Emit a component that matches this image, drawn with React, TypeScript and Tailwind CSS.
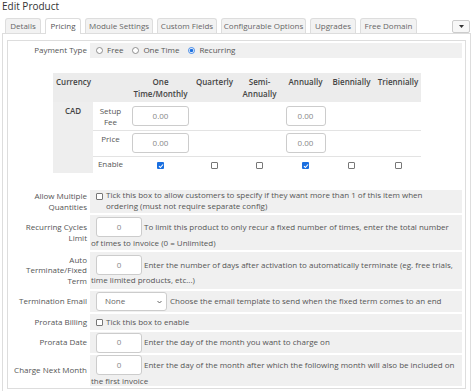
import React from 'react';

const tabs = [
  { label: 'Details', cls: 'w-[36px]' },
  { label: 'Pricing', cls: 'w-[36px]', active: true },
  { label: 'Module Settings', cls: 'w-[68px]' },
  { label: 'Custom Fields', cls: 'w-[60px]' },
  { label: 'Configurable Options', cls: 'w-[85px]' },
  { label: 'Upgrades', cls: 'w-[46px]' },
  { label: 'Free Domain', cls: 'w-[57px]' },
];

const Check = ({ on = false }: { on?: boolean }) =>
  on ? (
    <span className="inline-flex w-[7px] h-[7px] rounded-[1px] bg-[#1a6fe0] items-center justify-center shrink-0">
      <svg viewBox="0 0 8 8" className="w-[6px] h-[6px]">
        <path d="M1.3 4.2 3.2 6 6.7 2" fill="none" stroke="#fff" strokeWidth="1.5" />
      </svg>
    </span>
  ) : (
    <span className="inline-block w-[7px] h-[7px] rounded-[1px] border border-[#777] bg-white shrink-0" />
  );

const Radio = ({ on = false }: { on?: boolean }) => (
  <svg width="7" height="7" viewBox="0 0 7 7" className="shrink-0">
    <circle cx="3.5" cy="3.5" r="3" fill="#fff" stroke={on ? '#1a6fe0' : '#777'} strokeWidth="0.8" />
    {on && <circle cx="3.5" cy="3.5" r="1.8" fill="#1a6fe0" />}
  </svg>
);

const Box = ({ v, cls = 'w-[46px]' }: { v: string; cls?: string }) => (
  <span className={`inline-flex ${cls} h-[20px] items-center justify-center border border-[#ccc] rounded-[3px] bg-white text-[#888] shrink-0`}>
    {v}
  </span>
);

const Label = ({ children }: { children: React.ReactNode }) => (
  <div className="flex items-center justify-end text-right pr-[1px]">{children}</div>
);

const PricingTable = () => {
  const heads = ['Quarterly', 'Semi-\nAnnually', 'Annually', 'Biennially', 'Triennially'];
  const enabled = [true, false, false, true, false, false];
  return (
    <div className="grid grid-cols-[40px_35px_65px_43px_47px_45px_47px_46px] grid-rows-[29px_28px_26px_17px] w-[368px] ml-[43px]">
      {/* header */}
      <div className="col-span-2 bg-[#ececec] pt-[3px] pl-[3px] leading-[12px] font-semibold text-[#444]">Currency</div>
      <div className="bg-[#ececec] pt-[3px] leading-[12px] font-semibold text-[#444] text-center">
        One
        <br />
        Time/Monthly
      </div>
      {heads.map((h) => (
        <div key={h} className="bg-[#ececec] pt-[3px] leading-[12px] font-semibold text-[#444] text-center whitespace-pre-line">
          {h}
        </div>
      ))}

      {/* body */}
      <div className="row-span-3 bg-[#eeeeee] pt-[4px] text-center font-semibold text-[#444]">CAD</div>

      <div className="pt-[3px] text-center leading-[11px]">
        Setup
        <br />
        Fee
      </div>
      <div className="flex justify-center pt-[4px]"><Box v="0.00" cls="w-[57px]" /></div>
      <div />
      <div />
      <div className="flex justify-center pt-[4px]"><Box v="0.00" cls="w-[40px]" /></div>
      <div />
      <div />

      <div className="border-t border-[#e3e3e3] pt-[3px] text-center">Price</div>
      <div className="border-t border-[#e3e3e3] flex justify-center pt-[2px]"><Box v="0.00" cls="w-[57px]" /></div>
      <div className="border-t border-[#e3e3e3]" />
      <div className="border-t border-[#e3e3e3]" />
      <div className="border-t border-[#e3e3e3] flex justify-center pt-[2px]"><Box v="0.00" cls="w-[40px]" /></div>
      <div className="border-t border-[#e3e3e3]" />
      <div className="border-t border-[#e3e3e3]" />

      <div className="border-t border-[#e3e3e3] pt-[2px] text-center">Enable</div>
      {enabled.map((on, i) => (
        <div key={i} className="border-t border-[#e3e3e3] flex justify-center pt-[5px]">
          <Check on={on} />
        </div>
      ))}
    </div>
  );
};

export default function App() {
  return (
    <div className="w-[474px] h-[391px] overflow-hidden bg-white font-['Open_Sans',sans-serif] text-[8px] leading-[10.5px] text-[#555]">
      <div className="h-[18px] pl-[2px] text-[10px] leading-[12px] text-[#333]">Edit Product</div>

      {/* tabs */}
      <div className="flex items-start h-[15px] pl-[5px] pr-[4px] gap-[4px]">
        {tabs.map((t) => (
          <div
            key={t.label}
            className={`${t.cls} flex items-center justify-center border border-[#ddd] border-b-0 rounded-t-[3px] ${
              t.active ? 'h-[16px] bg-white relative z-10 text-[#555]' : 'h-[15px] bg-[#f2f2f2] text-[#666]'
            }`}
          >
            {t.label}
          </div>
        ))}
        <div className="ml-auto mt-[2px] w-[18px] h-[13px] flex items-center justify-center border border-[#ccc] rounded-[2px] bg-[#f7f7f7]">
          <svg width="5" height="3" viewBox="0 0 5 3">
            <path d="M0 0h5L2.5 3z" fill="#333" />
          </svg>
        </div>
      </div>

      {/* tab content */}
      <div className="ml-[2px] w-[469px] h-[360px] border border-[#ddd] pt-[6px] px-[4px]">
        <div className="border border-[#ddd] grid grid-cols-[78px_372px] gap-[2px] p-[2px]">
          <Label>Payment Type</Label>
          <div className="h-[15px] bg-[#f0f0f0] flex items-center pl-[6px]">
            <Radio />
            <span className="ml-[4px] mr-[9px]">Free</span>
            <Radio />
            <span className="ml-[4px] mr-[9px]">One Time</span>
            <Radio on />
            <span className="ml-[4px]">Recurring</span>
          </div>

          <div className="col-span-2 h-[128px] pt-[13px]">
            <PricingTable />
          </div>

          <Label>
            Allow Multiple
            <br />
            Quantities
          </Label>
          <div className="h-[23px] bg-[#f0f0f0] flex items-start pl-[6px] pt-[0px]">
            <span className="mt-[2px] mr-[3px]"><Check /></span>
            <span className="whitespace-nowrap">
              Tick this box to allow customers to specify if they want more than 1 of this item when
              <br />
              ordering (must not require separate config)
            </span>
          </div>

          <Label>
            Recurring Cycles
            <br />
            Limit
          </Label>
          <div className="h-[35px] bg-[#f0f0f0] pl-[1px] pt-[2px] whitespace-nowrap">
            <div className="flex items-center">
              <span className="ml-[5px] mr-[2px] flex"><Box v="0" /></span>
              To limit this product to only recur a fixed number of times, enter the total number
            </div>
            <div className="pt-[1px]">of times to invoice (0 = Unlimited)</div>
          </div>

          <Label>
            Auto
            <br />
            Terminate/Fixed
            <br />
            Term
          </Label>
          <div className="h-[37px] bg-[#f0f0f0] pl-[1px] pt-[3px] whitespace-nowrap">
            <div className="flex items-center">
              <span className="ml-[5px] mr-[2px] flex"><Box v="0" /></span>
              Enter the number of days after activation to automatically terminate (eg. free trials,
            </div>
            <div className="pt-[0px]">time limited products, etc...)</div>
          </div>

          <Label>Termination Email</Label>
          <div className="h-[21px] bg-[#f0f0f0] flex items-center pl-[6px] whitespace-nowrap">
            <span className="w-[71px] h-[19px] flex items-center justify-between pl-[8px] pr-[4px] border border-[#ccc] rounded-[3px] bg-white text-[#666] mr-[3px]">
              None
              <svg width="5" height="4" viewBox="0 0 5 4">
                <path d="M0.5 1 2.5 3 4.5 1" fill="none" stroke="#555" strokeWidth="0.9" />
              </svg>
            </span>
            Choose the email template to send when the fixed term comes to an end
          </div>

          <Label>Prorata Billing</Label>
          <div className="h-[16px] bg-[#f0f0f0] flex items-center pl-[6px]">
            <span className="mr-[3px] flex"><Check /></span>
            Tick this box to enable
          </div>

          <Label>Prorata Date</Label>
          <div className="h-[21px] bg-[#f0f0f0] flex items-center pl-[6px] whitespace-nowrap">
            <span className="mr-[2px] flex"><Box v="0" /></span>
            Enter the day of the month you want to charge on
          </div>

          <Label>Charge Next Month</Label>
          <div className="h-[31px] bg-[#f0f0f0] pl-[1px] whitespace-nowrap">
            <div className="flex items-center">
              <span className="ml-[5px] mr-[2px] flex"><Box v="0" /></span>
              Enter the day of the month after which the following month will also be included on
            </div>
            <div className="pt-[1px]">the first invoice</div>
          </div>
        </div>
      </div>
    </div>
  );
}
